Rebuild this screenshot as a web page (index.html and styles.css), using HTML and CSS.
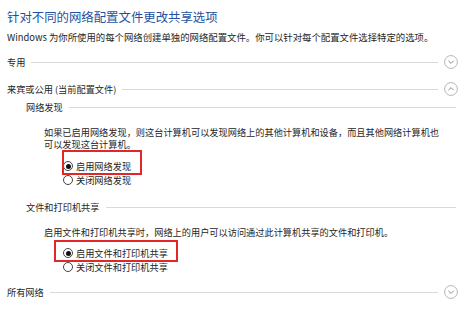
FILE: index.html
```html
<!DOCTYPE html>
<html lang="zh-CN">
  <head>
    <meta charset="UTF-8" />
    <meta name="viewport" content="width=device-width, initial-scale=1.0" />
    <title>高级共享设置</title>
    <link rel="stylesheet" href="styles.css">
  </head>
  <body>
    <div class="page">
      <h1 class="title">针对不同的网络配置文件更改共享选项</h1>
      <p class="intro">Windows 为你所使用的每个网络创建单独的网络配置文件。你可以针对每个配置文件选择特定的选项。</p>

      <div class="profile profile-first">
        <span class="profile-name">专用</span>
        <span class="rule"></span>
        <svg class="toggle" viewBox="0 0 14 14" width="14" height="14">
          <circle cx="7" cy="7" r="6.4" fill="none" stroke="#b4b4b4" stroke-width="1" />
          <path d="M4.4 5.8 L7 8.4 L9.6 5.8" fill="none" stroke="#8a8a8a" stroke-width="1" />
        </svg>
      </div>

      <div class="profile">
        <span class="profile-name">来宾或公用 (当前配置文件)</span>
        <span class="rule"></span>
        <svg class="toggle" viewBox="0 0 14 14" width="14" height="14">
          <circle cx="7" cy="7" r="6.4" fill="none" stroke="#b4b4b4" stroke-width="1" />
          <path d="M4.4 8.2 L7 5.6 L9.6 8.2" fill="none" stroke="#8a8a8a" stroke-width="1" />
        </svg>
      </div>

      <div class="group">
        <div class="group-head">
          <span>网络发现</span>
          <span class="rule"></span>
        </div>
        <p class="desc desc-first">如果已启用网络发现，则这台计算机可以发现网络上的其他计算机和设备，而且其他网络计算机也可以发现这台计算机。</p>
        <div class="options options-first">
          <div class="mark mark-discovery"></div>
          <label class="option"><span class="radio checked"></span>启用网络发现</label>
          <label class="option"><span class="radio"></span>关闭网络发现</label>
        </div>
      </div>

      <div class="group group-share">
        <div class="group-head">
          <span>文件和打印机共享</span>
          <span class="rule"></span>
        </div>
        <p class="desc">启用文件和打印机共享时，网络上的用户可以访问通过此计算机共享的文件和打印机。</p>
        <div class="options">
          <div class="mark mark-share"></div>
          <label class="option"><span class="radio checked"></span>启用文件和打印机共享</label>
          <label class="option"><span class="radio"></span>关闭文件和打印机共享</label>
        </div>
      </div>

      <div class="profile profile-all">
        <span class="profile-name">所有网络</span>
        <span class="rule"></span>
        <svg class="toggle" viewBox="0 0 14 14" width="14" height="14">
          <circle cx="7" cy="7" r="6.4" fill="none" stroke="#b4b4b4" stroke-width="1" />
          <path d="M4.4 5.8 L7 8.4 L9.6 5.8" fill="none" stroke="#8a8a8a" stroke-width="1" />
        </svg>
      </div>
    </div>
  </body>
</html>
```

FILE: styles.css
```css
body {
  margin: 0;
  background-color: #ffffff;
  font-family: "Noto Sans CJK SC", "Noto Sans", sans-serif;
  color: #262626;
  font-size: 9.2px;
}

.page {
  padding: 0 18px 0 7px;
}

.title {
  margin: 7px 0 0;
  font-size: 12.4px;
  line-height: 20px;
  font-weight: normal;
  color: #2452a0;
}

.intro {
  margin: 4px 0 0;
  font-size: 9.4px;
  line-height: 12px;
  white-space: nowrap;
}

.profile {
  display: flex;
  align-items: center;
  height: 14px;
  margin-top: 13px;
}

.profile-first {
  margin-top: 12px;
}

.profile-all {
  margin-top: 11px;
}

.rule {
  flex: 1;
  height: 1px;
  background-color: #dadada;
  margin-left: 6px;
}

.toggle {
  margin-left: 6px;
  margin-right: -2px;
}

.group {
  padding-left: 19px;
}

.group-head {
  display: flex;
  align-items: center;
  height: 12px;
  margin-top: 5px;
}

.group-share .group-head {
  margin-top: 14px;
}

.desc {
  margin: 13px 0 0 18px;
  line-height: 12px;
  padding-right: 8px;
}

.options {
  position: relative;
  margin: 8px 0 0 37px;
}

.options-first {
  margin-top: 9px;
}

.option {
  display: flex;
  align-items: center;
  height: 14px;
}

.radio {
  width: 8px;
  height: 8px;
  border: 1px solid #444;
  border-radius: 50%;
  margin-right: 3px;
  box-sizing: content-box;
  display: flex;
  align-items: center;
  justify-content: center;
  background: #fff;
}

.radio.checked::after {
  content: "";
  width: 5px;
  height: 5px;
  border-radius: 50%;
  background-color: #111;
}

.mark {
  position: absolute;
  border: 2px solid #e0272a;
  box-sizing: border-box;
  pointer-events: none;
}

.mark-discovery {
  left: -1px;
  top: -9px;
  width: 80px;
  height: 25px;
}

.mark-share {
  left: -9px;
  top: -6px;
  width: 124px;
  height: 22px;
}
```
